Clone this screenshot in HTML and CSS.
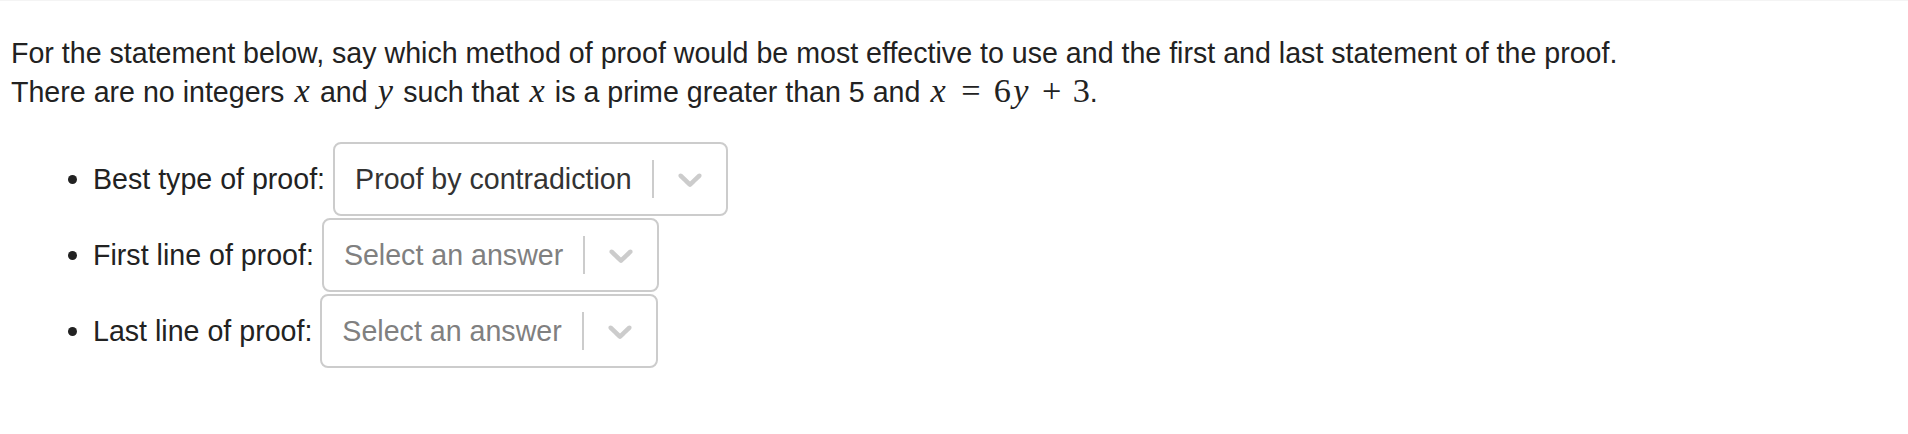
FILE: index.html
```html
<!DOCTYPE html>
<html lang="en">
  <head>
    <meta charset="UTF-8" />
    <meta name="viewport" content="width=device-width, initial-scale=1.0" />
    <title>Proof Methods</title>
    <link rel="stylesheet" href="styles.css">
  </head>
  <body>
    <div class="question">
      <p>
        For the statement below, say which method of proof would be most effective to use and the first and last statement of the proof.<br />
        There are no integers <span class="math"><i>x</i></span> and <span class="math"><i>y</i></span> such that <span class="math"><i>x</i></span> is a prime greater than 5 and <span class="math"><i>x</i><span class="rel">=</span>6<i>y</i><span class="bin">+</span>3</span>.
      </p>

      <ul class="answers">
        <li>
          <span class="label">Best type of proof:</span>
          <div class="select">
            <div class="select-value">Proof by contradiction</div>
            <span class="select-sep"></span>
            <div class="select-arrow">
              <svg viewBox="0 0 20 20" aria-hidden="true"><path d="M4.516 7.548c0.436-0.446 1.043-0.481 1.576 0l3.908 3.747 3.908-3.747c0.533-0.481 1.141-0.446 1.574 0 0.436 0.445 0.408 1.197 0 1.615-0.406 0.418-4.695 4.502-4.695 4.502-0.217 0.223-0.502 0.335-0.787 0.335s-0.57-0.112-0.789-0.335c0 0-4.287-4.084-4.695-4.502s-0.436-1.17 0-1.615z"></path></svg>
            </div>
          </div>
        </li>
        <li>
          <span class="label">First line of proof:</span>
          <div class="select">
            <div class="select-value placeholder">Select an answer</div>
            <span class="select-sep"></span>
            <div class="select-arrow">
              <svg viewBox="0 0 20 20" aria-hidden="true"><path d="M4.516 7.548c0.436-0.446 1.043-0.481 1.576 0l3.908 3.747 3.908-3.747c0.533-0.481 1.141-0.446 1.574 0 0.436 0.445 0.408 1.197 0 1.615-0.406 0.418-4.695 4.502-4.695 4.502-0.217 0.223-0.502 0.335-0.787 0.335s-0.57-0.112-0.789-0.335c0 0-4.287-4.084-4.695-4.502s-0.436-1.17 0-1.615z"></path></svg>
            </div>
          </div>
        </li>
        <li>
          <span class="label">Last line of proof:</span>
          <div class="select">
            <div class="select-value placeholder">Select an answer</div>
            <span class="select-sep"></span>
            <div class="select-arrow">
              <svg viewBox="0 0 20 20" aria-hidden="true"><path d="M4.516 7.548c0.436-0.446 1.043-0.481 1.576 0l3.908 3.747 3.908-3.747c0.533-0.481 1.141-0.446 1.574 0 0.436 0.445 0.408 1.197 0 1.615-0.406 0.418-4.695 4.502-4.695 4.502-0.217 0.223-0.502 0.335-0.787 0.335s-0.57-0.112-0.789-0.335c0 0-4.287-4.084-4.695-4.502s-0.436-1.17 0-1.615z"></path></svg>
            </div>
          </div>
        </li>
      </ul>
    </div>
  </body>
</html>
```

FILE: styles.css
```css
body {
  margin: 0;
  font-family: "Liberation Sans", Arial, sans-serif;
  color: #222222;
  background-color: #ffffff;
  border-top: 1px solid #f4f4f4;
}
.question {
  padding: 33px 11px 0;
  font-size: 28.6px;
}
.question p {
  margin: 0;
  line-height: 39px;
}
.math {
  font-family: "Liberation Serif", "Times New Roman", serif;
  font-size: 1.2em;
  line-height: 0;
}
.math i {
  padding: 0 0.065em;
}
.math .rel {
  margin: 0 0.385em;
}
.math .bin {
  margin: 0 0.33em;
}
.answers {
  list-style: none;
  margin: 29px 0 0;
  padding: 0 0 0 57px;
}
.answers li {
  display: flex;
  align-items: center;
  height: 76px;
}
.answers li::before {
  content: "";
  width: 9px;
  height: 9px;
  border-radius: 50%;
  background-color: #222222;
  margin-right: 16px;
}
.label {
  margin-right: 8px;
}
.select {
  display: flex;
  height: 74px;
  box-sizing: border-box;
  border: 2px solid #cccccc;
  border-radius: 8px;
  background-color: #ffffff;
}
.select-value {
  display: flex;
  align-items: center;
  padding: 4px 20px;
  color: #333333;
}
.select-value.placeholder {
  color: #808080;
}
.select-sep {
  width: 2px;
  margin: 16px 0;
  background-color: #cccccc;
}
.select-arrow {
  display: flex;
  align-items: center;
  padding: 16px;
  color: #cccccc;
}
.select-arrow svg {
  width: 40px;
  height: 40px;
  fill: currentColor;
}
```
